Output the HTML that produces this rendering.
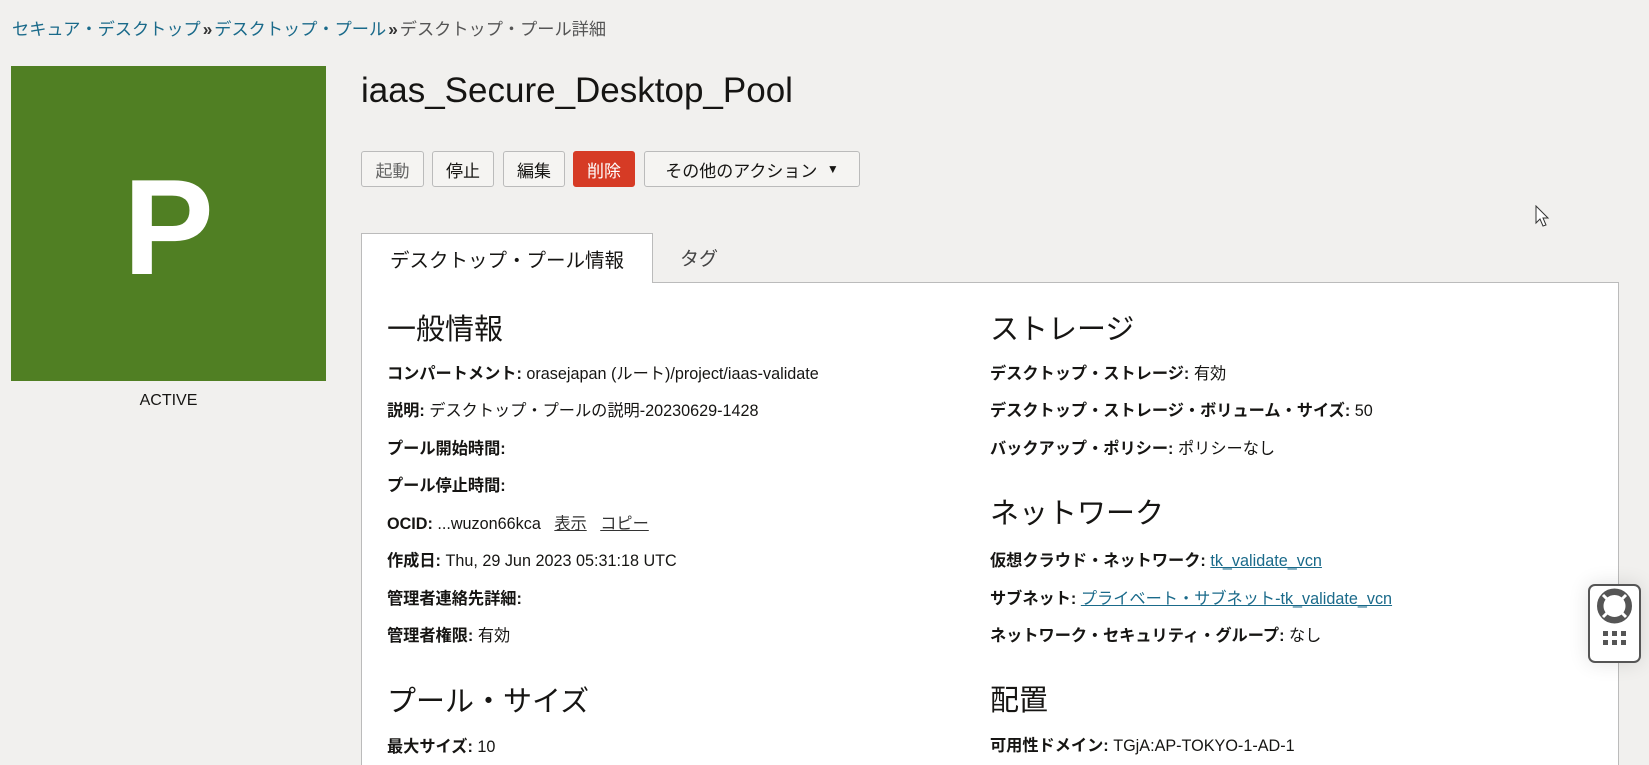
<!DOCTYPE html>
<html><head><meta charset="utf-8"><style>
*{margin:0;padding:0;box-sizing:border-box}
html,body{width:1649px;height:765px;overflow:hidden}
body{background:#f1f0ee;font-family:"Liberation Sans","Noto Sans CJK JP",sans-serif;color:#161513;position:relative}
.a{position:absolute;white-space:nowrap}
.bc{left:12px;top:15px;font-size:17.2px;color:#555}
.bc a{color:#1a6a8a;text-decoration:none}
.bc i{font-style:normal;font-weight:bold;color:#333;margin:0 2px}
.logo{left:11px;top:66px;width:315px;height:315px;background:#507f23;color:#fff;font-weight:bold;font-size:136px;display:flex;align-items:center;justify-content:center;padding-top:6px}
.act{left:11px;width:315px;top:392px;text-align:center;font-size:16px}
h1{position:absolute;left:361px;top:71px;font-size:35px;font-weight:normal}
.btn{position:absolute;top:151px;height:36px;border:1px solid #bbb;border-radius:3px;background:#f5f4f2;font-size:17px;display:flex;align-items:center;justify-content:center}
.tab{left:361px;top:233px;width:292px;height:50px;background:#fff;border:1px solid #bbb;border-bottom:none;font-size:19.5px;display:flex;align-items:center;justify-content:center;z-index:2}
.panel{left:361px;top:282px;width:1258px;height:483px;background:#fff;border:1px solid #bbb;border-bottom:none}
h2{position:absolute;font-size:29px;font-weight:normal}
.r{position:absolute;font-size:16.2px;white-space:nowrap}
.r b{font-weight:bold}
.r u{color:#1a6a8a}
</style></head><body>
<div class="a bc"><a>セキュア・デスクトップ</a><i>»</i><a>デスクトップ・プール</a><i>»</i>デスクトップ・プール詳細</div>
<div class="a logo">P</div>
<div class="a act">ACTIVE</div>
<h1>iaas_Secure_Desktop_Pool</h1>
<div class="btn" style="left:361px;width:63px;color:#666">起動</div>
<div class="btn" style="left:432px;width:62px">停止</div>
<div class="btn" style="left:503px;width:62px">編集</div>
<div class="btn" style="left:573px;width:62px;background:#d63b25;border-color:#d63b25;color:#fff">削除</div>
<div class="btn" style="left:644px;width:216px">その他のアクション&nbsp;&nbsp;<span style="font-size:12px">▼</span></div>
<div class="a tab">デスクトップ・プール情報</div>
<div class="a" style="left:680px;top:244px;font-size:19px;color:#444">タグ</div>
<div class="a panel"></div>
<h2 style="left:387px;top:306px">一般情報</h2>
<div class="r" style="left:387px;top:360px"><b>コンパートメント:</b> orasejapan (ルート)/project/iaas-validate</div>
<div class="r" style="left:387px;top:397px"><b>説明:</b> デスクトップ・プールの説明-20230629-1428</div>
<div class="r" style="left:387px;top:435px"><b>プール開始時間:</b></div>
<div class="r" style="left:387px;top:472px"><b>プール停止時間:</b></div>
<div class="r" style="left:387px;top:510px"><b>OCID:</b> ...wuzon66kca &nbsp; <u style="color:#333">表示</u> &nbsp; <u style="color:#333">コピー</u></div>
<div class="r" style="left:387px;top:547px"><b>作成日:</b> Thu, 29 Jun 2023 05:31:18 UTC</div>
<div class="r" style="left:387px;top:585px"><b>管理者連絡先詳細:</b></div>
<div class="r" style="left:387px;top:622px"><b>管理者権限:</b> 有効</div>
<h2 style="left:387px;top:678px">プール・サイズ</h2>
<div class="r" style="left:387px;top:733px"><b>最大サイズ:</b> 10</div>
<h2 style="left:990px;top:306px">ストレージ</h2>
<div class="r" style="left:990px;top:360px"><b>デスクトップ・ストレージ:</b> 有効</div>
<div class="r" style="left:990px;top:397px"><b>デスクトップ・ストレージ・ボリューム・サイズ:</b> 50</div>
<div class="r" style="left:990px;top:435px"><b>バックアップ・ポリシー:</b> ポリシーなし</div>
<h2 style="left:990px;top:490px">ネットワーク</h2>
<div class="r" style="left:990px;top:547px"><b>仮想クラウド・ネットワーク:</b> <u>tk_validate_vcn</u></div>
<div class="r" style="left:990px;top:585px"><b>サブネット:</b> <u>プライベート・サブネット-tk_validate_vcn</u></div>
<div class="r" style="left:990px;top:622px"><b>ネットワーク・セキュリティ・グループ:</b> なし</div>
<h2 style="left:990px;top:677px">配置</h2>
<div class="r" style="left:990px;top:732px"><b>可用性ドメイン:</b> TGjA:AP-TOKYO-1-AD-1</div>
<div class="a" style="left:1588px;top:584px;width:53px;height:79px;background:#fff;border:2px solid #555;border-radius:7px;box-shadow:0 0 20px rgba(0,0,0,.12)">
<svg width="49" height="75" viewBox="0 0 49 75"><circle cx="24.5" cy="20" r="14" fill="none" stroke="#555" stroke-width="6"/><circle cx="24.5" cy="20" r="17" fill="none" stroke="#555" stroke-width="1"/>
<g stroke="#fff" stroke-width="3"><line x1="13" y1="9" x2="17.5" y2="13.5"/><line x1="36" y1="9" x2="31.5" y2="13.5"/><line x1="13" y1="31" x2="17.5" y2="26.5"/><line x1="36" y1="31" x2="31.5" y2="26.5"/></g>
<g fill="#555"><rect x="13" y="45" width="5" height="5"/><rect x="22" y="45" width="5" height="5"/><rect x="31" y="45" width="5" height="5"/><rect x="13" y="54" width="5" height="5"/><rect x="22" y="54" width="5" height="5"/><rect x="31" y="54" width="5" height="5"/></g></svg></div>
<svg class="a" style="left:1535px;top:205px" width="16" height="24" viewBox="0 0 16 24"><path d="M1 1 L1 18 L5 14 L8 21 L11 20 L8 13 L13 13 Z" fill="#fff" stroke="#333" stroke-width="1"/></svg>
</body></html>
